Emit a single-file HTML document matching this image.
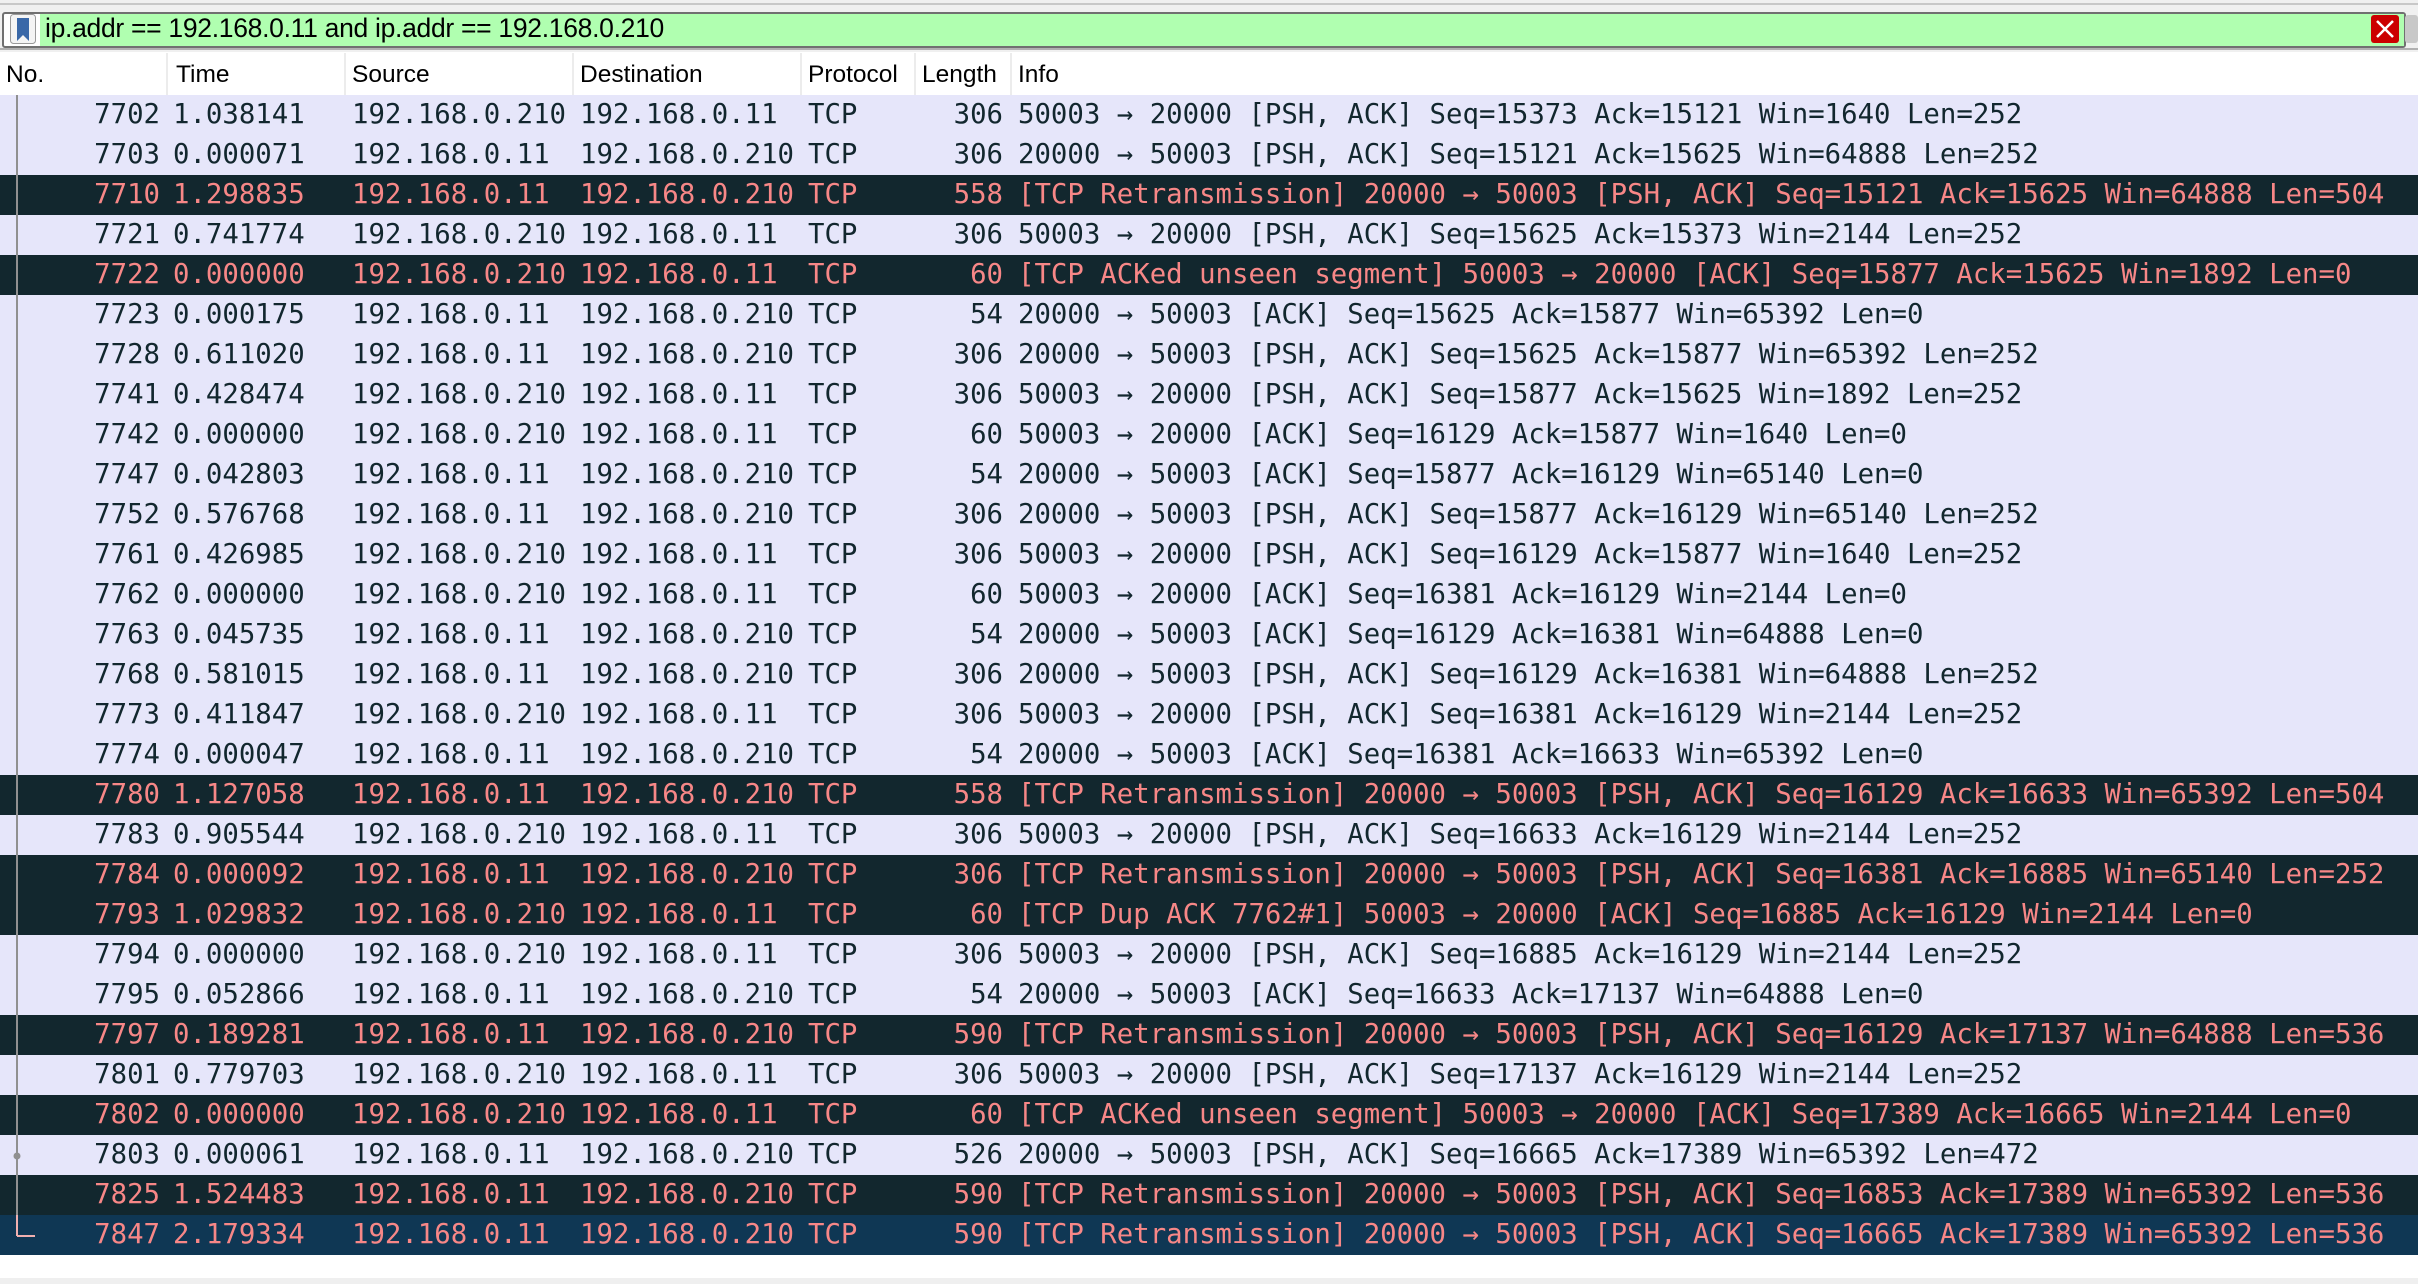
<!DOCTYPE html>
<html><head><meta charset="utf-8">
<style>
html,body{margin:0;padding:0;}
body{width:2418px;height:1284px;position:relative;overflow:hidden;background:#fff;font-family:"DejaVu Sans Mono","Liberation Mono",monospace;}
.top{position:absolute;left:0;top:0;width:2418px;height:52px;background:#f0f0f0;}
.top .l1{position:absolute;left:0;top:3px;width:2418px;height:2px;background:#c8c8c8;}
.fbox{position:absolute;left:2px;top:12px;width:2400px;height:32px;border:2px solid #707070;border-radius:3px;background:#fff;}
.green{position:absolute;left:36px;top:0;right:0;height:32px;background:#b0ffb0;}
.ftxt{position:absolute;left:45px;top:10px;font-family:"Liberation Sans",sans-serif;font-size:26.5px;line-height:36px;color:#000;letter-spacing:-0.3px;}
.bm{position:absolute;left:10px;top:14px;}
.xbtn{position:absolute;left:2371px;top:15px;width:28px;height:28px;background:#c00;border-radius:3px;}
.gbtn{position:absolute;left:2405px;top:15px;width:13px;height:28px;background:#c8c8c8;border-radius:3px;}
.top .l2{position:absolute;left:0;top:48px;width:2418px;height:2px;background:#b0b0b0;}
.hdr{position:absolute;left:0;top:53px;width:2418px;height:42px;background:#fff;font-family:"Liberation Sans",sans-serif;font-size:24.5px;color:#000;}
.hdr span{position:absolute;top:8px;}
.hdr i{position:absolute;top:0;width:2px;height:42px;background:#ececec;}
.row{position:absolute;left:0;width:2418px;height:40px;font-size:27.35px;line-height:40px;white-space:pre;background:#e6e6fa;color:#12272e;}
.row.d{background:#12272e;color:#f78787;}
.row.s{background:#0f3754;color:#f78787;}
.row span{position:absolute;top:0;}
.no{right:2258px;text-align:right;}
.ln{right:1415px;text-align:right;}
.bot{position:absolute;left:0;top:1278px;width:2418px;height:6px;background:#efefef;}
</style></head><body>
<div class="top"><div class="l1"></div><div class="l2"></div></div>
<div class="fbox"><div class="green"></div></div>
<svg class="bm" width="26" height="30" viewBox="0 0 26 30"><rect x="0.5" y="0.5" width="25" height="29" rx="3" fill="#f4f4f4" stroke="#9a9a9a"/><path d="M7 4 H19 V27 L13 21 L7 27 Z" fill="#3a68a8"/></svg>
<div class="ftxt">ip.addr == 192.168.0.11 and ip.addr == 192.168.0.210</div>
<div class="xbtn"><svg width="28" height="28" viewBox="0 0 28 28"><path d="M6 6 L22 22 M22 6 L6 22" stroke="#fff" stroke-width="2.5"/></svg></div>
<div class="gbtn"></div>
<div class="hdr">
<span style="left:6px">No.</span><i style="left:166px"></i>
<span style="left:176px">Time</span><i style="left:344px"></i>
<span style="left:352px">Source</span><i style="left:572px"></i>
<span style="left:580px">Destination</span><i style="left:800px"></i>
<span style="left:808px">Protocol</span><i style="left:914px"></i>
<span style="left:922px">Length</span><i style="left:1010px"></i>
<span style="left:1018px">Info</span>
</div>
<div class="row" style="top:95px"><span class="no">7702</span><span style="left:173px">1.038141</span><span style="left:352px">192.168.0.210</span><span style="left:580px">192.168.0.11</span><span style="left:808px">TCP</span><span class="ln">306</span><span style="left:1018px">50003 → 20000 [PSH, ACK] Seq=15373 Ack=15121 Win=1640 Len=252</span></div>
<div class="row" style="top:135px"><span class="no">7703</span><span style="left:173px">0.000071</span><span style="left:352px">192.168.0.11</span><span style="left:580px">192.168.0.210</span><span style="left:808px">TCP</span><span class="ln">306</span><span style="left:1018px">20000 → 50003 [PSH, ACK] Seq=15121 Ack=15625 Win=64888 Len=252</span></div>
<div class="row d" style="top:175px"><span class="no">7710</span><span style="left:173px">1.298835</span><span style="left:352px">192.168.0.11</span><span style="left:580px">192.168.0.210</span><span style="left:808px">TCP</span><span class="ln">558</span><span style="left:1018px">[TCP Retransmission] 20000 → 50003 [PSH, ACK] Seq=15121 Ack=15625 Win=64888 Len=504</span></div>
<div class="row" style="top:215px"><span class="no">7721</span><span style="left:173px">0.741774</span><span style="left:352px">192.168.0.210</span><span style="left:580px">192.168.0.11</span><span style="left:808px">TCP</span><span class="ln">306</span><span style="left:1018px">50003 → 20000 [PSH, ACK] Seq=15625 Ack=15373 Win=2144 Len=252</span></div>
<div class="row d" style="top:255px"><span class="no">7722</span><span style="left:173px">0.000000</span><span style="left:352px">192.168.0.210</span><span style="left:580px">192.168.0.11</span><span style="left:808px">TCP</span><span class="ln">60</span><span style="left:1018px">[TCP ACKed unseen segment] 50003 → 20000 [ACK] Seq=15877 Ack=15625 Win=1892 Len=0</span></div>
<div class="row" style="top:295px"><span class="no">7723</span><span style="left:173px">0.000175</span><span style="left:352px">192.168.0.11</span><span style="left:580px">192.168.0.210</span><span style="left:808px">TCP</span><span class="ln">54</span><span style="left:1018px">20000 → 50003 [ACK] Seq=15625 Ack=15877 Win=65392 Len=0</span></div>
<div class="row" style="top:335px"><span class="no">7728</span><span style="left:173px">0.611020</span><span style="left:352px">192.168.0.11</span><span style="left:580px">192.168.0.210</span><span style="left:808px">TCP</span><span class="ln">306</span><span style="left:1018px">20000 → 50003 [PSH, ACK] Seq=15625 Ack=15877 Win=65392 Len=252</span></div>
<div class="row" style="top:375px"><span class="no">7741</span><span style="left:173px">0.428474</span><span style="left:352px">192.168.0.210</span><span style="left:580px">192.168.0.11</span><span style="left:808px">TCP</span><span class="ln">306</span><span style="left:1018px">50003 → 20000 [PSH, ACK] Seq=15877 Ack=15625 Win=1892 Len=252</span></div>
<div class="row" style="top:415px"><span class="no">7742</span><span style="left:173px">0.000000</span><span style="left:352px">192.168.0.210</span><span style="left:580px">192.168.0.11</span><span style="left:808px">TCP</span><span class="ln">60</span><span style="left:1018px">50003 → 20000 [ACK] Seq=16129 Ack=15877 Win=1640 Len=0</span></div>
<div class="row" style="top:455px"><span class="no">7747</span><span style="left:173px">0.042803</span><span style="left:352px">192.168.0.11</span><span style="left:580px">192.168.0.210</span><span style="left:808px">TCP</span><span class="ln">54</span><span style="left:1018px">20000 → 50003 [ACK] Seq=15877 Ack=16129 Win=65140 Len=0</span></div>
<div class="row" style="top:495px"><span class="no">7752</span><span style="left:173px">0.576768</span><span style="left:352px">192.168.0.11</span><span style="left:580px">192.168.0.210</span><span style="left:808px">TCP</span><span class="ln">306</span><span style="left:1018px">20000 → 50003 [PSH, ACK] Seq=15877 Ack=16129 Win=65140 Len=252</span></div>
<div class="row" style="top:535px"><span class="no">7761</span><span style="left:173px">0.426985</span><span style="left:352px">192.168.0.210</span><span style="left:580px">192.168.0.11</span><span style="left:808px">TCP</span><span class="ln">306</span><span style="left:1018px">50003 → 20000 [PSH, ACK] Seq=16129 Ack=15877 Win=1640 Len=252</span></div>
<div class="row" style="top:575px"><span class="no">7762</span><span style="left:173px">0.000000</span><span style="left:352px">192.168.0.210</span><span style="left:580px">192.168.0.11</span><span style="left:808px">TCP</span><span class="ln">60</span><span style="left:1018px">50003 → 20000 [ACK] Seq=16381 Ack=16129 Win=2144 Len=0</span></div>
<div class="row" style="top:615px"><span class="no">7763</span><span style="left:173px">0.045735</span><span style="left:352px">192.168.0.11</span><span style="left:580px">192.168.0.210</span><span style="left:808px">TCP</span><span class="ln">54</span><span style="left:1018px">20000 → 50003 [ACK] Seq=16129 Ack=16381 Win=64888 Len=0</span></div>
<div class="row" style="top:655px"><span class="no">7768</span><span style="left:173px">0.581015</span><span style="left:352px">192.168.0.11</span><span style="left:580px">192.168.0.210</span><span style="left:808px">TCP</span><span class="ln">306</span><span style="left:1018px">20000 → 50003 [PSH, ACK] Seq=16129 Ack=16381 Win=64888 Len=252</span></div>
<div class="row" style="top:695px"><span class="no">7773</span><span style="left:173px">0.411847</span><span style="left:352px">192.168.0.210</span><span style="left:580px">192.168.0.11</span><span style="left:808px">TCP</span><span class="ln">306</span><span style="left:1018px">50003 → 20000 [PSH, ACK] Seq=16381 Ack=16129 Win=2144 Len=252</span></div>
<div class="row" style="top:735px"><span class="no">7774</span><span style="left:173px">0.000047</span><span style="left:352px">192.168.0.11</span><span style="left:580px">192.168.0.210</span><span style="left:808px">TCP</span><span class="ln">54</span><span style="left:1018px">20000 → 50003 [ACK] Seq=16381 Ack=16633 Win=65392 Len=0</span></div>
<div class="row d" style="top:775px"><span class="no">7780</span><span style="left:173px">1.127058</span><span style="left:352px">192.168.0.11</span><span style="left:580px">192.168.0.210</span><span style="left:808px">TCP</span><span class="ln">558</span><span style="left:1018px">[TCP Retransmission] 20000 → 50003 [PSH, ACK] Seq=16129 Ack=16633 Win=65392 Len=504</span></div>
<div class="row" style="top:815px"><span class="no">7783</span><span style="left:173px">0.905544</span><span style="left:352px">192.168.0.210</span><span style="left:580px">192.168.0.11</span><span style="left:808px">TCP</span><span class="ln">306</span><span style="left:1018px">50003 → 20000 [PSH, ACK] Seq=16633 Ack=16129 Win=2144 Len=252</span></div>
<div class="row d" style="top:855px"><span class="no">7784</span><span style="left:173px">0.000092</span><span style="left:352px">192.168.0.11</span><span style="left:580px">192.168.0.210</span><span style="left:808px">TCP</span><span class="ln">306</span><span style="left:1018px">[TCP Retransmission] 20000 → 50003 [PSH, ACK] Seq=16381 Ack=16885 Win=65140 Len=252</span></div>
<div class="row d" style="top:895px"><span class="no">7793</span><span style="left:173px">1.029832</span><span style="left:352px">192.168.0.210</span><span style="left:580px">192.168.0.11</span><span style="left:808px">TCP</span><span class="ln">60</span><span style="left:1018px">[TCP Dup ACK 7762#1] 50003 → 20000 [ACK] Seq=16885 Ack=16129 Win=2144 Len=0</span></div>
<div class="row" style="top:935px"><span class="no">7794</span><span style="left:173px">0.000000</span><span style="left:352px">192.168.0.210</span><span style="left:580px">192.168.0.11</span><span style="left:808px">TCP</span><span class="ln">306</span><span style="left:1018px">50003 → 20000 [PSH, ACK] Seq=16885 Ack=16129 Win=2144 Len=252</span></div>
<div class="row" style="top:975px"><span class="no">7795</span><span style="left:173px">0.052866</span><span style="left:352px">192.168.0.11</span><span style="left:580px">192.168.0.210</span><span style="left:808px">TCP</span><span class="ln">54</span><span style="left:1018px">20000 → 50003 [ACK] Seq=16633 Ack=17137 Win=64888 Len=0</span></div>
<div class="row d" style="top:1015px"><span class="no">7797</span><span style="left:173px">0.189281</span><span style="left:352px">192.168.0.11</span><span style="left:580px">192.168.0.210</span><span style="left:808px">TCP</span><span class="ln">590</span><span style="left:1018px">[TCP Retransmission] 20000 → 50003 [PSH, ACK] Seq=16129 Ack=17137 Win=64888 Len=536</span></div>
<div class="row" style="top:1055px"><span class="no">7801</span><span style="left:173px">0.779703</span><span style="left:352px">192.168.0.210</span><span style="left:580px">192.168.0.11</span><span style="left:808px">TCP</span><span class="ln">306</span><span style="left:1018px">50003 → 20000 [PSH, ACK] Seq=17137 Ack=16129 Win=2144 Len=252</span></div>
<div class="row d" style="top:1095px"><span class="no">7802</span><span style="left:173px">0.000000</span><span style="left:352px">192.168.0.210</span><span style="left:580px">192.168.0.11</span><span style="left:808px">TCP</span><span class="ln">60</span><span style="left:1018px">[TCP ACKed unseen segment] 50003 → 20000 [ACK] Seq=17389 Ack=16665 Win=2144 Len=0</span></div>
<div class="row" style="top:1135px"><span class="no">7803</span><span style="left:173px">0.000061</span><span style="left:352px">192.168.0.11</span><span style="left:580px">192.168.0.210</span><span style="left:808px">TCP</span><span class="ln">526</span><span style="left:1018px">20000 → 50003 [PSH, ACK] Seq=16665 Ack=17389 Win=65392 Len=472</span></div>
<div class="row d" style="top:1175px"><span class="no">7825</span><span style="left:173px">1.524483</span><span style="left:352px">192.168.0.11</span><span style="left:580px">192.168.0.210</span><span style="left:808px">TCP</span><span class="ln">590</span><span style="left:1018px">[TCP Retransmission] 20000 → 50003 [PSH, ACK] Seq=16853 Ack=17389 Win=65392 Len=536</span></div>
<div class="row s" style="top:1215px"><span class="no">7847</span><span style="left:173px">2.179334</span><span style="left:352px">192.168.0.11</span><span style="left:580px">192.168.0.210</span><span style="left:808px">TCP</span><span class="ln">590</span><span style="left:1018px">[TCP Retransmission] 20000 → 50003 [PSH, ACK] Seq=16665 Ack=17389 Win=65392 Len=536</span></div>
<svg style="position:absolute;left:0;top:95px" width="40" height="1160">
<line x1="17" y1="0" x2="17" y2="1141" stroke="#909090" stroke-width="2"/>
<line x1="17" y1="1141" x2="35" y2="1141" stroke="#f0b0b0" stroke-width="2"/>
<line x1="17" y1="1120" x2="17" y2="1141" stroke="#f0b0b0" stroke-width="2"/>
<circle cx="17" cy="1061" r="3.5" fill="#909090"/>
</svg>
<div class="bot"></div>
</body></html>
